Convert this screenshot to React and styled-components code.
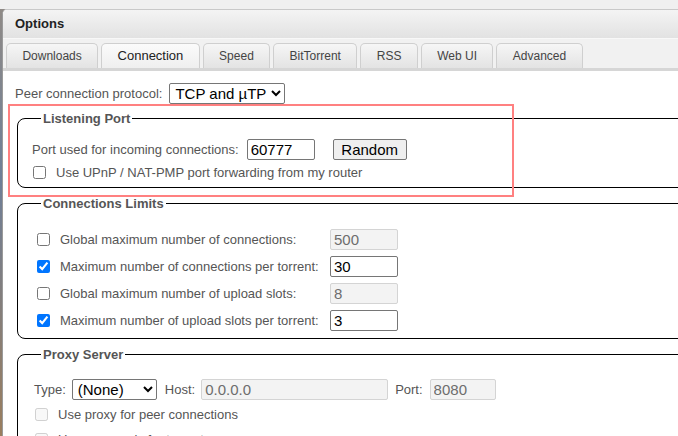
import styled, { createGlobalStyle } from "styled-components";

const GlobalStyle = createGlobalStyle`
  html, body {
    margin: 0;
    padding: 0;
    background: #f0f0f0;
    overflow: hidden;
  }
  body {
    font-family: "Liberation Sans", Arial, sans-serif;
    font-size: 13px;
    color: #555;
  }
`;

const tabs = ["Downloads", "Connection", "Speed", "BitTorrent", "RSS", "Web UI", "Advanced"];

const limits = [
  { label: "Global maximum number of connections:", value: "500", on: false },
  { label: "Maximum number of connections per torrent:", value: "30", on: true },
  { label: "Global maximum number of upload slots:", value: "8", on: false },
  { label: "Maximum number of upload slots per torrent:", value: "3", on: true },
];

export default function App() {
  return (
    <>
      <GlobalStyle />
      <Desktop>
        <Window>
          <TitleBar>Options</TitleBar>
          <TabStrip>
            {tabs.map((t) => (
              <Tab key={t} $active={t === "Connection"}>
                {t}
              </Tab>
            ))}
          </TabStrip>

          <Content>
            <Row>
              <span>Peer connection protocol:</span>
              <Select $w={116} defaultValue="both">
                <option value="both">TCP and µTP</option>
                <option value="tcp">TCP</option>
                <option value="utp">µTP</option>
              </Select>
            </Row>

            <Fieldset $pad="13px 14px 5px" $legend={9}>
              <legend>Listening Port</legend>
              <Row $gap={8}>
                <span>Port used for incoming connections:</span>
                <TextInput $w={68} defaultValue="60777" />
                <Button>Random</Button>
              </Row>
              <CheckRow>
                <Check type="checkbox" />
                <span>Use UPnP / NAT-PMP port forwarding from my router</span>
              </CheckRow>
            </Fieldset>

            <Fieldset $pad="15px 19px 4px" $legend={4}>
              <legend>Connections Limits</legend>
              <LimitsGrid>
                {limits.map((l) => (
                  <LimitRow key={l.label}>
                    <Check type="checkbox" defaultChecked={l.on} />
                    <span>{l.label}</span>
                    <TextInput $w={68} defaultValue={l.value} disabled={!l.on} />
                  </LimitRow>
                ))}
              </LimitsGrid>
            </Fieldset>

            <Fieldset $pad="17px 16px 8px" $legend={7}>
              <legend>Proxy Server</legend>
              <ProxyRow>
                <span>Type:</span>
                <Select $w={85} defaultValue="none">
                  <option value="none">(None)</option>
                  <option value="socks">SOCKS5</option>
                </Select>
                <span>Host:</span>
                <TextInput $w={187} defaultValue="0.0.0.0" disabled />
                <span>Port:</span>
                <TextInput $w={66} defaultValue="8080" disabled />
              </ProxyRow>
              <CheckRow $tight>
                <Check type="checkbox" disabled />
                <span>Use proxy for peer connections</span>
              </CheckRow>
              <CheckRow $tight>
                <Check type="checkbox" disabled />
                <span>Use proxy only for torrents</span>
              </CheckRow>
            </Fieldset>
          </Content>
        </Window>
        <Highlight />
      </Desktop>
    </>
  );
}

const Desktop = styled.div`
  position: relative;
  margin-top: 9px;
  padding-left: 2px;
  background: linear-gradient(180deg, #8f8a86 0%, #6f7f98 40%, #9a7e5e 100%);
  height: 427px;
`;

const Window = styled.div`
  width: 740px;
  height: 427px;
  background: #fff;
  border-left: 1px solid #9a9a9a;
  border-top: 1px solid #c9c9c9;
  border-top-left-radius: 5px;
  overflow: hidden;
`;

const TitleBar = styled.div`
  height: 28px;
  line-height: 28px;
  padding-left: 12px;
  font-weight: bold;
  font-size: 13px;
  color: #222;
  background: linear-gradient(180deg, #f4f4f4, #e2e2e2);
  border-bottom: 1px solid #f8f8f8;
`;

const TabStrip = styled.div`
  display: flex;
  gap: 3px;
  padding: 4px 0 0 3px;
  height: 25px;
  background: #f1f1f1;
  border-bottom: 3px solid #d6d6d6;
`;

const Tab = styled.div`
  height: 24px;
  line-height: 24px;
  padding: 0 15.4px;
  border: 1px solid #cfcfcf;
  border-bottom: none;
  border-radius: 5px 5px 0 0;
  font-size: ${(p) => (p.$active ? "13px" : "12px")};
  color: ${(p) => (p.$active ? "#222" : "#444")};
  background: ${(p) =>
    p.$active
      ? "linear-gradient(180deg, #fbfbfb, #efefef)"
      : "linear-gradient(180deg, #f6f6f6, #e3e3e3)"};
`;

const Content = styled.div`
  padding: 12px 0 0 12px;
`;

const Row = styled.div`
  display: flex;
  align-items: center;
  gap: ${(p) => p.$gap || 7}px;
  height: 20px;

  & > button {
    margin-left: 10px;
  }
`;

const Fieldset = styled.fieldset`
  margin: 8px 0 8px 2px;
  border: 1px solid #000;
  border-radius: 8px;
  padding: ${(p) => p.$pad};

  legend {
    margin-left: ${(p) => p.$legend}px;
    padding: 0 2px;
    font-weight: bold;
    font-size: 13px;
    line-height: 15px;
    color: #555;
  }
`;

const CheckRow = styled.label`
  display: flex;
  align-items: center;
  gap: 10px;
  height: 20px;
  margin-top: ${(p) => (p.$tight ? "5px" : "3px")};
`;

const Check = styled.input`
  width: 13px;
  height: 13px;
  margin: 0 0 0 1px;
  flex: none;
`;

const LimitsGrid = styled.div`
  display: grid;
  grid-auto-rows: 27px;
`;

const LimitRow = styled.div`
  display: grid;
  grid-template-columns: 23px 270px 68px;
  align-items: center;

  & > input[type="checkbox"] {
    margin: 0;
  }
`;

const ProxyRow = styled.div`
  display: flex;
  align-items: center;
  height: 20px;
  gap: 6px;

  & > span:nth-of-type(2) {
    margin-left: 2px;
  }
  & > span:nth-of-type(3) {
    margin-left: 1px;
  }
  & > span:nth-of-type(3) + input {
    margin-left: 1px;
  }
`;

const TextInput = styled.input`
  box-sizing: border-box;
  width: ${(p) => p.$w}px;
  height: 21px;
  padding: 0 3px;
  font-family: "Liberation Sans", Arial, sans-serif;
  font-size: 15px;
  color: #000;
  background: #fff;
  border: 1px solid #767676;
  border-radius: 2px;

  &:disabled {
    background: #f3f3f3;
    color: #6d6d6d;
    border-color: #d4d4d4;
  }
`;

const Select = styled.select`
  box-sizing: border-box;
  width: ${(p) => p.$w}px;
  height: 21px;
  font-family: "Liberation Sans", Arial, sans-serif;
  font-size: 15px;
  color: #000;
  background: #fff;
  border: 1px solid #767676;
  border-radius: 2px;
  padding: 0 1px;
`;

const Button = styled.button`
  box-sizing: border-box;
  height: 21px;
  width: 74px;
  font-family: "Liberation Sans", Arial, sans-serif;
  font-size: 15px;
  color: #000;
  background: #efefef;
  border: 1px solid #767676;
  border-radius: 2px;
  padding: 0;
`;

const Highlight = styled.div`
  position: absolute;
  left: 8px;
  top: 95px;
  width: 502px;
  height: 89px;
  border: 2px solid #ff8080;
  pointer-events: none;
`;
